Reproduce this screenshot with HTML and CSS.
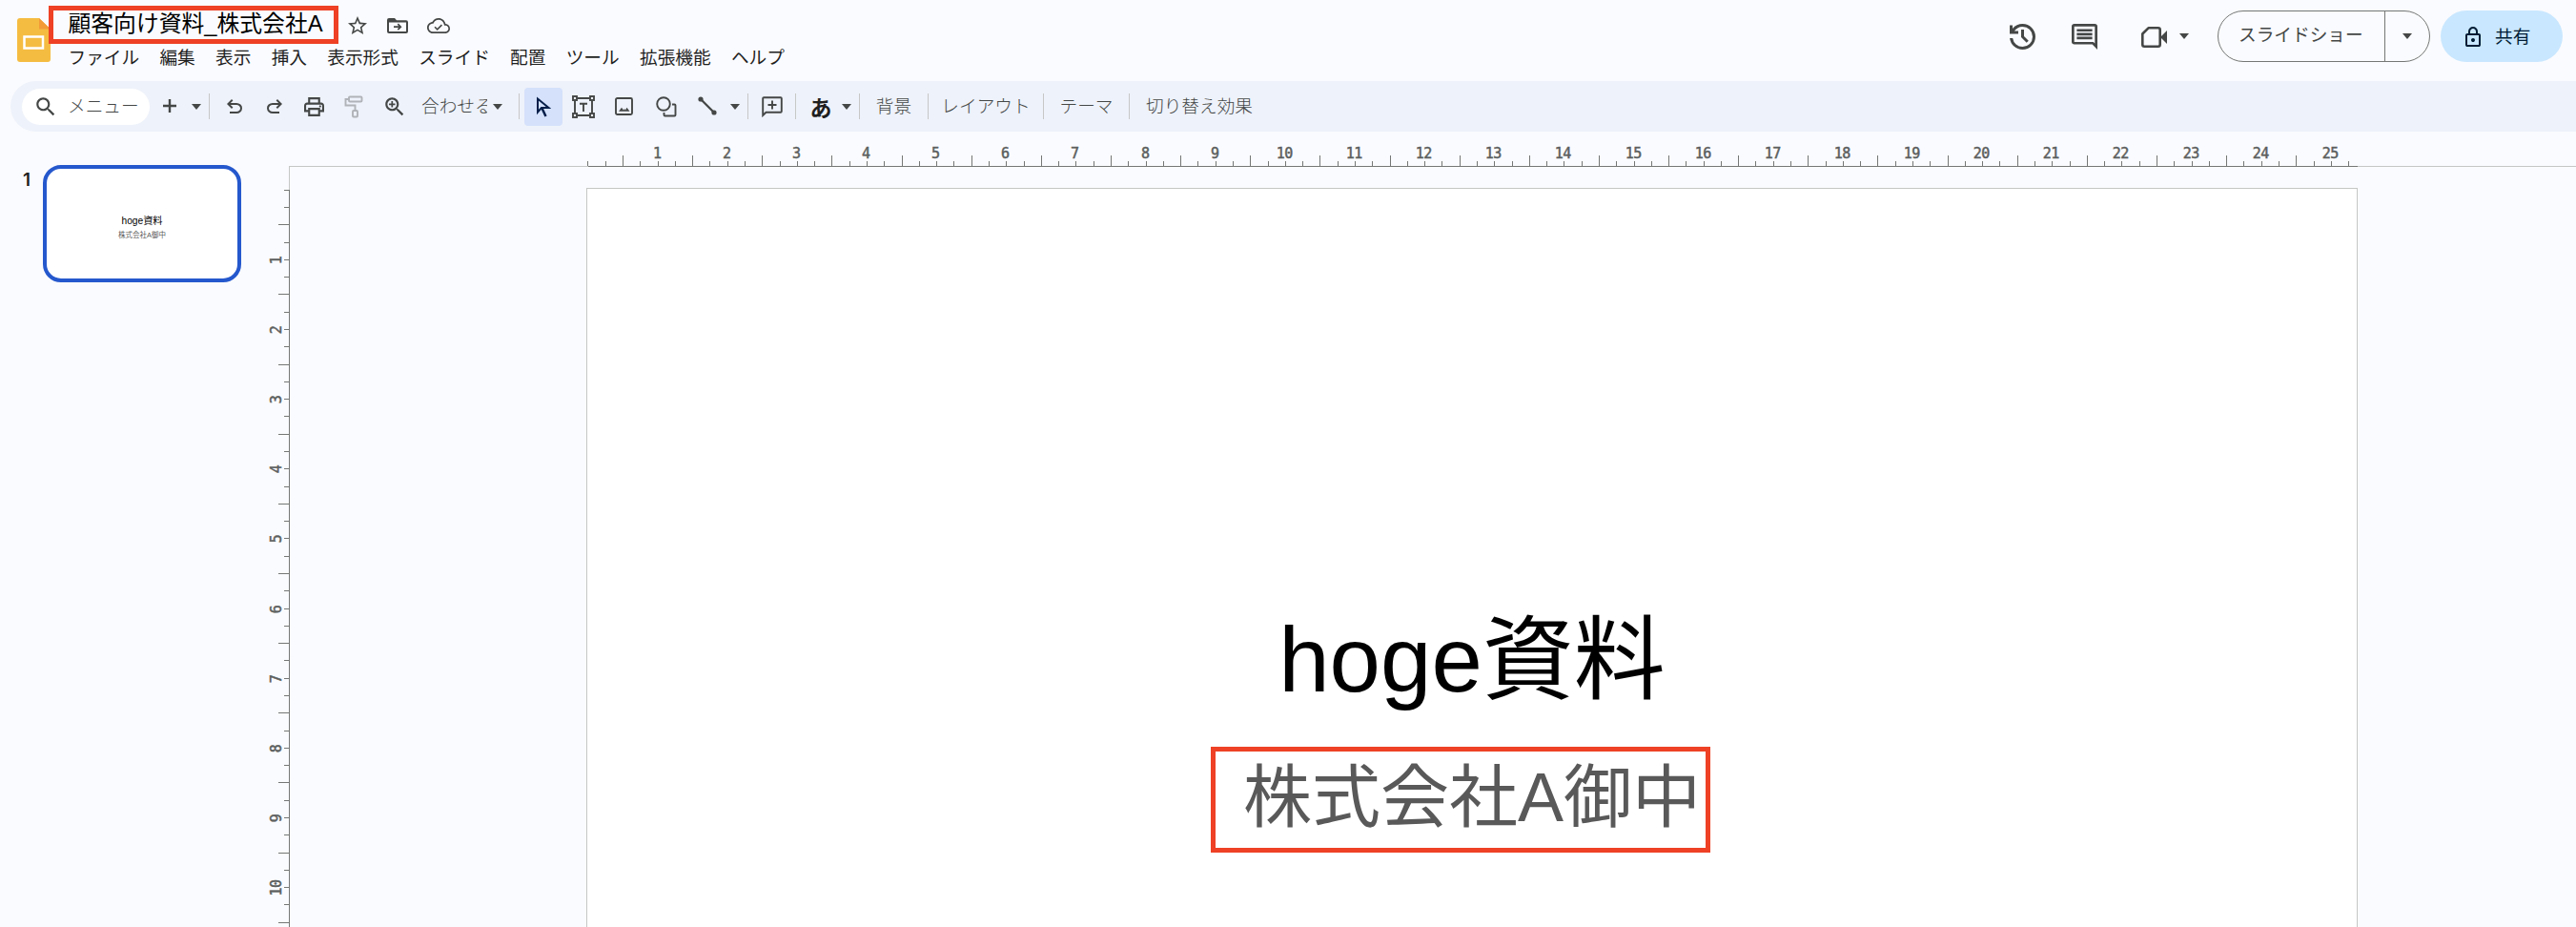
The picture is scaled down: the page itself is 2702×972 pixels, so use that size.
FILE: index.html
```html
<!DOCTYPE html>
<html lang="ja">
<head>
    <meta charset="UTF-8">
    <meta name="viewport" content="width=device-width, initial-scale=1.0">
    <title>顧客向け資料_株式会社A</title>
    <link rel="stylesheet" href="styles.css">
</head>
<body>
    <div class="app">
        <header class="header">
            <svg class="logo" viewBox="0 0 35 46">
                <path d="M3 0h20l12 11.500v31.500a3 3 0 0 1-3 3H3a3 3 0 0 1-3-3V3a3 3 0 0 1 3-3z" fill="#f5bc42"/>
                <path d="M23 0l12 11.500H23z" fill="#f29b37"/>
                <rect x="7.500" y="19.500" width="19.500" height="12" fill="none" stroke="#fff" stroke-width="2.500"/>
            </svg>
            <div class="heading">
                <div class="title-row">
                    <h1 class="doc-title">顧客向け資料_株式会社A</h1>
                    <svg class="icon star" viewBox="0 0 24 24"><path d="M22 9.240l-7.190-.62L12 2 9.190 8.630 2 9.240l5.460 4.730L5.820 21 12 17.270 18.180 21l-1.630-7.030L22 9.240zM12 15.400l-3.760 2.270 1-4.280-3.320-2.880 4.380-.38L12 6.100l1.710 4.040 4.380.38-3.320 2.880 1 4.280L12 15.400z"/></svg>
                    <svg class="icon folder" viewBox="0 0 22 16"><path d="M2 0h6l2 2.200h10a2 2 0 0 1 2 2V14a2 2 0 0 1-2 2H2a2 2 0 0 1-2-2V2a2 2 0 0 1 2-2zm0 4.500V14h18V4.500z" fill-rule="evenodd"/><path d="M7 9.200h7M11.300 6.200l3 3-3 3" fill="none" stroke="#444746" stroke-width="1.700"/></svg>
                    <svg class="icon cloud" viewBox="0 0 24 24"><path d="M19.350 10.040C18.670 6.590 15.640 4 12 4 9.110 4 6.600 5.640 5.350 8.040 2.340 8.360 0 10.910 0 14c0 3.310 2.690 6 6 6h13c2.760 0 5-2.240 5-5 0-2.640-2.050-4.780-4.650-4.960zM19 18.300H6c-2.400 0-4.300-1.900-4.300-4.300 0-2.200 1.700-4 3.800-4.200l1-.1.500-.9C8 6.900 9.900 5.700 12 5.700c2.750 0 5.100 1.950 5.650 4.650l.3 1.400 1.400.1c1.700.1 3 1.500 3 3.150 0 1.800-1.500 3.300-3.350 3.300zm-8.300-3.500l-2.100-2.100-1.100 1.100 3.200 3.200 5.300-5.300-1.100-1.100z"/></svg>
                </div>
                <nav class="menu">
                    <span>ファイル</span>
                    <span>編集</span>
                    <span>表示</span>
                    <span>挿入</span>
                    <span>表示形式</span>
                    <span>スライド</span>
                    <span>配置</span>
                    <span>ツール</span>
                    <span>拡張機能</span>
                    <span>ヘルプ</span>
                </nav>
            </div>
            <div class="actions">
                <svg class="icon action-icon" viewBox="120 -840 720 720"><path d="M480-120q-138 0-240.500-91.500T122-440h82q14 104 92.500 172T480-200q117 0 198.500-81.500T760-480q0-117-81.500-198.500T480-760q-69 0-129 32t-101 88h110v80H120v-240h80v94q51-64 124.500-99T480-840q75 0 140.500 28.500t114 77q48.500 48.500 77 114T840-480q0 75-28.500 140.500t-77 114q-48.500 48.500-114 77T480-120Zm112-192L440-464v-216h80v184l128 128-56 56Z"/></svg>
                <svg class="icon action-icon comment" viewBox="80 -880 800 800"><path d="M240-400h480v-80H240v80Zm0-120h480v-80H240v80Zm0-120h480v-80H240v80ZM880-80 720-240H160q-33 0-56.500-23.500T80-320v-480q0-33 23.500-56.500T160-880h640q33 0 56.500 23.500T880-800v720ZM160-320h594l46 45v-525H160v480Z"/></svg>
                <svg class="icon action-icon camera" viewBox="0 0 27 22"><path d="M7.500 1.300h10.200a2 2 0 0 1 2 2v15.400a2 2 0 0 1-2 2H3.300a2 2 0 0 1-2-2V7.500z" fill="none" stroke="#444746" stroke-width="2.600" stroke-linejoin="round"/><path d="M20 11l7-7v14z"/></svg>
                <i class="caret"></i>
                <div class="slideshow">
                    <span class="slideshow-label">スライドショー</span>
                    <span class="slideshow-more"><i class="caret"></i></span>
                </div>
                <div class="share">
                    <svg class="lock" viewBox="160 -920 640 840"><path d="M240-80q-33 0-56.500-23.500T160-160v-400q0-33 23.500-56.500T240-640h40v-80q0-83 58.500-141.500T480-920q83 0 141.500 58.500T680-720v80h40q33 0 56.500 23.500T800-560v400q0 33-23.500 56.500T720-80H240Zm0-80h480v-400H240v400Zm240-120q33 0 56.500-23.500T560-360q0-33-23.500-56.500T480-440q-33 0-56.500 23.500T400-360q0 33 23.500 56.500T480-280ZM360-640h240v-80q0-50-35-85t-85-35q-50 0-85 35t-35 85v80Z"/></svg>
                    <span class="share-label">共有</span>
                </div>
            </div>
            <div class="mark mark-title"></div>
        </header>

        <div class="toolbar">
            <div class="search">
                <svg class="icon" width="26" height="26" viewBox="0 0 24 24"><path d="M15.500 14h-.79l-.28-.27C15.410 12.590 16 11.110 16 9.500 16 5.910 13.090 3 9.500 3S3 5.910 3 9.500 5.910 16 9.500 16c1.610 0 3.090-.59 4.230-1.570l.27.28v.79l5 4.990L20.490 19l-4.990-5zm-6 0C7.010 14 5 11.990 5 9.500S7.010 5 9.500 5 14 7.010 14 9.500 11.990 14 9.500 14z"/></svg>
                <span class="search-label">メニュー</span>
            </div>
            <div class="tool plus"><svg class="icon" width="14" height="14" viewBox="0 0 14 14"><path d="M5.800 0h2.400v5.800H14v2.400H8.200V14H5.800V8.200H0V5.800h5.800z"/></svg></div>
            <div class="drop"><i class="caret"></i></div>
            <div class="sep"></div>
            <div class="tool history"><svg class="icon undo" width="24" height="24" viewBox="0 -960 960 960"><path d="M280-200v-80h284q63 0 109.500-40T720-420q0-60-46.500-100T564-560H312l104 104-56 56-200-200 200-200 56 56-104 104h252q97 0 169.500 63T800-420q0 94-72.500 157T564-200H280Z"/></svg></div>
            <div class="tool"><svg class="icon redo" width="24" height="24" viewBox="0 -960 960 960"><path d="M280-200v-80h284q63 0 109.500-40T720-420q0-60-46.500-100T564-560H312l104 104-56 56-200-200 200-200 56 56-104 104h252q97 0 169.500 63T800-420q0 94-72.500 157T564-200H280Z"/></svg></div>
            <div class="tool"><svg class="icon" width="21" height="20" viewBox="80 -840 800 720" preserveAspectRatio="none"><path d="M640-640v-120H320v120h-80v-200h480v200h-80Zm80 180q17 0 28.500-11.500T760-500q0-17-11.500-28.500T720-540q-17 0-28.500 11.500T680-500q0 17 11.500 28.500T720-460Zm-80 260v-160H320v160h320Zm80 80H240v-160H80v-240q0-51 35-85.500t85-34.500h560q51 0 85.500 34.500T880-520v240H720v160Zm80-240v-160q0-17-11.500-28.500T760-560H200q-17 0-28.500 11.500T160-520v160h80v-80h480v80h80Z"/></svg></div>
            <div class="tool"><svg width="20" height="24" viewBox="0 0 20 24" fill="none" stroke="#b0b3b8" stroke-width="1.900"><rect x="5" y="1.500" width="13.500" height="5" rx="1"/><path d="M5 4H1.500v6.500h10V16"/><rect x="9" y="16" width="5" height="6.500" rx="1"/></svg></div>
            <div class="tool zoom"><svg class="icon" width="26" height="26" viewBox="0 0 24 24"><path d="M15.500 14h-.79l-.28-.27C15.410 12.590 16 11.110 16 9.500 16 5.910 13.090 3 9.500 3S3 5.910 3 9.500 5.910 16 9.500 16c1.610 0 3.090-.59 4.230-1.570l.27.28v.79l5 4.990L20.490 19l-4.990-5zm-6 0C7.010 14 5 11.990 5 9.500S7.010 5 9.500 5 14 7.010 14 9.500 11.990 14 9.500 14zM8.700 6.500h1.600v2.200h2.200v1.600h-2.200v2.200H8.700v-2.200H6.500V8.700h2.200z"/></svg></div>
            <div class="zoom-value">合わせる</div>
            <div class="drop zoom-drop"><i class="caret"></i></div>
            <div class="sep"></div>
            <div class="tool selected"><svg width="16" height="22" viewBox="0 0 16 22"><path d="M2 2.500v14l4-4.500h7.500z" fill="none" stroke="#041e49" stroke-width="2"/><path d="M6.500 12.500l4 8.500" stroke="#041e49" stroke-width="2.500"/></svg></div>
            <div class="tool wide"><svg class="line-icon" width="24" height="24" viewBox="0 0 24 24"><path d="M5.500 3h13M5.500 21h13M3 5.500v13M21 5.500v13"/><rect x="1" y="1" width="4" height="4"/><rect x="19" y="1" width="4" height="4"/><rect x="1" y="19" width="4" height="4"/><rect x="19" y="19" width="4" height="4"/><path d="M8 8.800h8M12 8.800V17"/></svg></div>
            <div class="tool wide"><svg class="line-icon" width="19" height="19" viewBox="0 0 19 19"><rect x="1" y="1" width="17" height="17" rx="1.500"/><path d="M4 14.800l3-4 2 2.600 1-1.400 1 1.400 1.500-2.600 3 4z" fill="#444746" stroke="none"/></svg></div>
            <div class="tool wide shapes"><svg class="line-icon" width="22" height="22" viewBox="0 0 22 22"><circle cx="8" cy="8" r="6.800"/><path d="M17 8.500h2.500a1 1 0 0 1 1 1v10a1 1 0 0 1-1 1H9.500a1 1 0 0 1-1-1V17"/></svg></div>
            <div class="tool wide line"><svg class="line-icon" width="20" height="20" viewBox="0 0 20 20"><path d="M3 3l14 14" stroke-width="2.300"/><circle cx="3" cy="3" r="2.600" fill="#444746" stroke="none"/><circle cx="17" cy="17" r="2.600" fill="#444746" stroke="none"/></svg></div>
            <div class="drop"><i class="caret"></i></div>
            <div class="sep"></div>
            <div class="tool wide"><svg class="line-icon" width="22" height="22" viewBox="0 0 22 22"><path d="M1.200 20V2.200a1 1 0 0 1 1-1h17.600a1 1 0 0 1 1 1v13.600a1 1 0 0 1-1 1H4.500z"/><path d="M11 4.500v9M6.500 9h9"/></svg></div>
            <div class="sep"></div>
            <div class="tool input-mode">あ</div>
            <div class="drop input-drop"><i class="caret"></i></div>
            <div class="sep"></div>
            <div class="label background">背景</div>
            <div class="sep"></div>
            <div class="label layout">レイアウト</div>
            <div class="sep"></div>
            <div class="label theme">テーマ</div>
            <div class="sep"></div>
            <div class="label transition">切り替え効果</div>
        </div>

        <main class="editor">
            <aside class="filmstrip">
                <span class="page-number">1</span>
                <div class="thumb">
                    <p class="thumb-title">hoge資料</p>
                    <p class="thumb-sub">株式会社A御中</p>
                </div>
            </aside>
            <svg class="ruler-x" width="2399" height="37"></svg>
            <svg class="ruler-y" width="44" height="797"></svg>
            <section class="canvas">
                <div class="slide">
                    <h2 class="slide-title">hoge資料</h2>
                    <p class="slide-sub">株式会社A御中</p>
                    <div class="mark mark-sub"></div>
                </div>
            </section>
        </main>
    </div>
    <script>
        "use strict"
        const svgNs = "http://www.w3.org/2000/svg";
        const step = 73.14 / 4; // four ticks in a centimetre

        function add(parent, name, attrs, text) {
            const el = document.createElementNS(svgNs, name);
            for(const key in attrs) {
                el.setAttribute(key, attrs[key]);
            }
            if(text) el.textContent = text;
            parent.appendChild(el);
        }

        // horizontal ruler
        const rulerX = document.querySelector('.ruler-x');
        add(rulerX, "rect", { x: 0, y: 36, width: 2399, height: 1, class: "edge" });
        add(rulerX, "rect", { x: 314, y: 36, width: 1856, height: 1, class: "tick" });
        for(let i = 0; i <= 101; i++) {
            const x = Math.round(313.4 + i * step);
            const size = i % 4 === 2 ? 11 : 5;
            add(rulerX, "rect", { x: x, y: 36 - size, width: 1, height: size, class: "tick" });
            if(i > 0 && i % 4 === 0) {
                add(rulerX, "text", { x: x - 0.7, y: 28.3, class: "number" }, String(i / 4));
            }
        }

        // vertical ruler
        const rulerY = document.querySelector('.ruler-y');
        add(rulerY, "rect", { x: 43, y: 0, width: 1, height: 24, class: "edge" });
        add(rulerY, "rect", { x: 43, y: 24, width: 1, height: 780, class: "tick" });
        for(let i = 0; i <= 43; i++) {
            const y = Math.round(23.7 + i * step);
            const size = i % 4 === 2 ? 11 : 5;
            add(rulerY, "rect", { x: 43 - size, y: y, width: size, height: 1, class: "tick" });
            if(i > 0 && i % 4 === 0) {
                add(rulerY, "text", { transform: "translate(35 " + (y + 1) + ") rotate(-90)", class: "number" }, String(i / 4));
            }
        }
    </script>
</body>
</html>
```
FILE: styles.css
```css
* {
    box-sizing: border-box;
    padding: 0;
    margin: 0;
}
body {
    background-color: #fafbfe;
    color: #1f1f1f;
    font-family: "Liberation Sans", "Noto Sans CJK JP", sans-serif;
    font-size: 18.67px;
    overflow: hidden;
}
.app {
    width: 2702px;
    height: 972px;
    overflow: hidden;
}
svg {
    display: block;
    flex-shrink: 0;
}
.icon {
    fill: #444746;
}
.line-icon {
    fill: none;
    stroke: #444746;
    stroke-width: 1.9;
}
.caret {
    width: 0;
    height: 0;
    border: 5.5px solid transparent;
    border-width: 6px 5.5px 0;
    border-top-color: #444746;
}
.mark {
    position: absolute;
    border: 5px solid #ee4125;
}

/* header */
.header {
    display: flex;
    position: relative;
    height: 85px;
    padding-left: 18px;
}
.logo {
    width: 35px;
    height: 46px;
    margin-top: 19px;
}
.heading {
    padding-left: 18.5px;
}
.title-row {
    display: flex;
    align-items: center;
    height: 47px;
    padding-top: 7px;
}
.doc-title {
    width: 291.5px;
    font-size: 23.8px;
    font-weight: 400;
    line-height: 30px;
    color: #000;
    white-space: nowrap;
    margin-top: -5px;
}
.star {
    width: 24px;
    height: 24px;
}
.folder {
    width: 22px;
    height: 16px;
    margin-left: 19px;
}
.cloud {
    width: 24px;
    height: 24px;
    margin-left: 20px;
}
.menu {
    display: flex;
    gap: 21.3px;
    line-height: 28px;
    white-space: nowrap;
}
.actions {
    display: flex;
    align-items: center;
    height: 54px;
    margin: 11px 14px 0 auto;
}
.action-icon {
    width: 27px;
    height: 27px;
}
.comment {
    margin-left: 38px;
}
.camera {
    height: 22px;
    margin: 2px 13px 0 46px;
}
.slideshow {
    display: flex;
    width: 223px;
    height: 54px;
    margin: 0 11px 0 30px;
    border: 1px solid #747775;
    border-radius: 27px;
    color: #444746;
}
.slideshow-label {
    width: 175px;
    border-right: 1px solid #747775;
    line-height: 50px;
    padding-left: 21px;
}
.slideshow-more {
    display: flex;
    flex: 1;
    align-items: center;
    justify-content: center;
}
.share {
    display: flex;
    align-items: center;
    width: 128px;
    height: 54px;
    padding-left: 26px;
    border-radius: 27px;
    background-color: #c9e7ff;
    color: #001d35;
}
.share-label {
    margin-top: -4px;
}
.lock {
    width: 16px;
    height: 21px;
    margin-right: 15px;
    fill: #001d35;
}
.mark-title {
    left: 51px;
    top: 6px;
    width: 304px;
    height: 40px;
}

/* toolbar */
.toolbar {
    display: flex;
    align-items: center;
    height: 53px;
    margin-left: 11px;
    padding-left: 12px;
    border-radius: 27px 0 0 27px;
    background-color: #eef2fa;
    color: #444746;
    font-weight: 300;
    white-space: nowrap;
}
.search {
    display: flex;
    align-items: center;
    gap: 10px;
    width: 134px;
    height: 38px;
    padding-left: 12px;
    border-radius: 19px;
    background-color: #fff;
}
.search-label {
    margin-top: -4px;
}
.tool {
    display: flex;
    align-items: center;
    justify-content: center;
    width: 41.5px;
    height: 40px;
}
.wide {
    width: 43px;
}
.plus {
    width: 39px;
    padding: 0 0 2px 2px;
}
.drop {
    display: flex;
    justify-content: center;
    width: 20px;
}
.sep {
    width: 1px;
    height: 27px;
    margin: 0 3px;
    background-color: #c7c7c7;
}
.history {
    margin-left: 2.5px;
}
.redo {
    transform: scaleX(-1);
}
.zoom {
    padding-left: 3px;
}
.zoom-value {
    width: 69px;
    margin: -4px 0 0 9px;
    overflow: hidden;
}
.zoom-drop {
    margin: 0 9px 0 1px;
}
.selected {
    width: 40px;
    margin-left: 2px;
    border-radius: 4px;
    background-color: #d5e1fb;
}
.shapes {
    width: 45px;
}
.line {
    width: 40px;
    padding: 0 0 2px 1px;
}
.input-mode {
    width: 40px;
    margin-left: 3px;
    font-size: 23px;
    font-weight: 700;
    color: #1f1f1f;
}
.input-drop {
    margin-left: -3px;
}
.label {
    margin-top: -4px;
    text-align: center;
}
.background {
    width: 65px;
}
.layout {
    width: 114px;
}
.theme {
    width: 83px;
}
.transition {
    width: 140px;
}

/* editor */
.editor {
    display: grid;
    grid-template-columns: 260px 44px 1fr;
    grid-template-rows: 37px 797px;
}
.filmstrip {
    display: flex;
    grid-row: 1 / 3;
    padding: 35px 0 0 24px;
}
.page-number {
    width: 21px;
    padding-top: 4px;
    font-family: Inter, sans-serif;
    font-size: 19px;
    font-weight: 600;
}
.thumb {
    width: 208px;
    height: 123px;
    padding-top: 47px;
    border: 4px solid #2558cd;
    border-radius: 19px;
    background-color: #fff;
    text-align: center;
}
.thumb-title {
    font-size: 10.2px;
    line-height: 16px;
    color: #000;
}
.thumb-sub {
    font-size: 7.5px;
    line-height: 14px;
    color: #595959;
}
.ruler-x {
    grid-column: 2 / 4;
    margin-left: 43px;
}
.tick {
    fill: #747775;
}
.edge {
    fill: #c4c7c5;
}
.number {
    fill: #5c5f5e;
    stroke: #5c5f5e;
    stroke-width: 0.5px;
    font-family: "DejaVu Sans Mono", monospace;
    font-size: 15px;
    letter-spacing: -0.6px;
    text-anchor: middle;
}
.canvas {
    padding: 22px 0 0 311px;
    overflow: hidden;
}
.slide {
    position: relative;
    width: 1858px;
    height: 1046px;
    padding-top: 428px;
    border: 1px solid #c4c7c5;
    background-color: #fff;
    text-align: center;
}
.slide-title {
    font-size: 96px;
    font-weight: 400;
    line-height: 132px;
    color: #000;
}
.slide-sub {
    font-size: 72px;
    line-height: 156px;
    color: #595959;
}
.mark-sub {
    left: 654px;
    top: 585px;
    width: 524px;
    height: 111px;
}
```
